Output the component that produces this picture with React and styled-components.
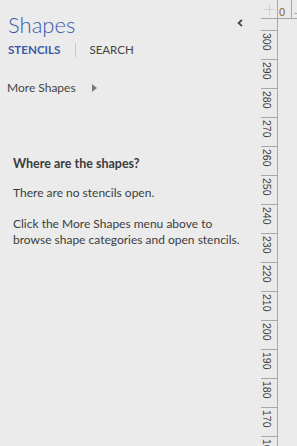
import React from "react";
import styled, { createGlobalStyle } from "styled-components";

const GlobalStyle = createGlobalStyle`
  html, body {
    margin: 0;
    padding: 0;
    background: #ebebeb;
  }
  body {
    font-family: Lato, "Open Sans", "Liberation Sans", sans-serif;
  }
`;

const Window = styled.div`
  display: flex;
  width: 297px;
  height: 446px;
  overflow: hidden;
  background: #ebebeb;
`;

const Panel = styled.div`
  width: 261px;
  flex-shrink: 0;
  display: flex;
  flex-direction: column;
  position: relative;
`;

const Header = styled.div`
  padding: 12px 0 0 8px;
`;

const Title = styled.h1`
  margin: 0;
  font-size: 22px;
  font-weight: 300;
  line-height: 26px;
  color: #3a5aa8;
`;

const Tabs = styled.div`
  display: flex;
  align-items: center;
  margin-top: 4px;
  height: 16px;
`;

const Tab = styled.span`
  font-size: ${p => (p.active ? "11.6px" : "11.5px")};
  line-height: 16px;
  font-weight: ${p => (p.active ? 700 : 400)};
  color: ${p => (p.active ? "#3a5aa8" : "#444")};
`;

const Divider = styled.span`
  width: 1px;
  height: 14px;
  background: #c8c8c8;
  margin: 0 13px 0 15px;
`;

const Collapse = styled.button`
  position: absolute;
  top: 19px;
  right: 18px;
  border: 0;
  background: none;
  padding: 0;
  display: flex;
  cursor: pointer;
`;

const MoreShapes = styled.div`
  display: flex;
  align-items: center;
  margin: 22px 0 0 7px;
  font-size: 12px;
  line-height: 16px;
  color: #444;
  gap: 16px;
`;

const Arrow = styled.span`
  width: 0;
  height: 0;
  margin-top: -1px;
  border-top: 4.5px solid transparent;
  border-bottom: 4.5px solid transparent;
  border-left: 5px solid #777;
`;

const Empty = styled.div`
  margin: 60px 0 0 13px;
  font-size: 12px;
  line-height: 16px;
  color: #3c3c3c;
`;

const EmptyTitle = styled.p`
  margin: 0 0 13px;
  font-size: 12.5px;
  font-weight: 700;
`;

const EmptyText = styled.p`
  margin: 0 0 15px;
`;

const Ruler = styled.div`
  flex: 1;
  display: flex;
  flex-direction: column;
`;

const TopBar = styled.div`
  display: flex;
  height: 22px;
  border-bottom: 1px solid #a8a8a8;
`;

const Corner = styled.div`
  width: 16px;
  border-right: 1px solid #a8a8a8;
  display: flex;
  align-items: center;
  justify-content: center;
`;

const HRuler = styled.div`
  flex: 1;
  display: flex;
`;

const HSegment = styled.div`
  width: 14px;
  flex-shrink: 0;
  border-right: 1px solid #a8a8a8;
  font-family: "Liberation Sans Narrow", "Liberation Sans", Arial, sans-serif;
  font-size: 11px;
  line-height: 10px;
  color: #8a5a20;
  padding: 7px 0 0 1px;
  box-sizing: border-box;
`;

const HRest = styled.div`
  font-size: 9px;
  color: #888;
  padding: 7px 0 0 2px;
`;

const Body = styled.div`
  flex: 1;
  display: flex;
`;

const VRuler = styled.div`
  width: 16px;
  border-right: 1px solid #a8a8a8;
  padding-top: 11px;
  display: flex;
  flex-direction: column;
`;

const Tick = styled.div`
  height: 29px;
  flex-shrink: 0;
  box-sizing: border-box;
  border-top: 1px solid #a8a8a8;
  padding: 2px 0 0 1px;
`;

const TickLabel = styled.span`
  writing-mode: vertical-rl;
  font-family: "Liberation Sans Narrow", "Liberation Sans", Arial, sans-serif;
  font-size: 10.5px;
  line-height: 9px;
  color: #3c3c3c;
`;

const Canvas = styled.div`
  flex: 1;
`;

const ticks = [];
for (let v = 300; v >= 160; v -= 10) ticks.push(v);

export default function App() {
  return (
    <>
      <GlobalStyle />
      <Window>
        <Panel>
          <Header>
            <Title>Shapes</Title>
            <Tabs>
              <Tab active>STENCILS</Tab>
              <Divider />
              <Tab>SEARCH</Tab>
            </Tabs>
          </Header>
          <Collapse>
            <svg width="6" height="8" viewBox="0 0 6 8">
              <path d="M5 0.8 L1.6 4 L5 7.2" fill="none" stroke="#444" strokeWidth="1.8" />
            </svg>
          </Collapse>
          <MoreShapes>
            More Shapes
            <Arrow />
          </MoreShapes>
          <Empty>
            <EmptyTitle>Where are the shapes?</EmptyTitle>
            <EmptyText>There are no stencils open.</EmptyText>
            <EmptyText>
              Click the More Shapes menu above to
              <br />
              browse shape categories and open stencils.
            </EmptyText>
          </Empty>
        </Panel>
        <Ruler>
          <TopBar>
            <Corner>
              <svg width="11" height="11" viewBox="0 0 11 11">
                <path d="M5.5 0 V11 M0 5.5 H11" stroke="#d0d0d0" strokeWidth="1" />
              </svg>
            </Corner>
            <HRuler>
              <HSegment>0</HSegment>
              <HRest>-</HRest>
            </HRuler>
          </TopBar>
          <Body>
            <VRuler>
              {ticks.map(v => (
                <Tick key={v}>
                  <TickLabel>{v}</TickLabel>
                </Tick>
              ))}
            </VRuler>
            <Canvas />
          </Body>
        </Ruler>
      </Window>
    </>
  );
}
